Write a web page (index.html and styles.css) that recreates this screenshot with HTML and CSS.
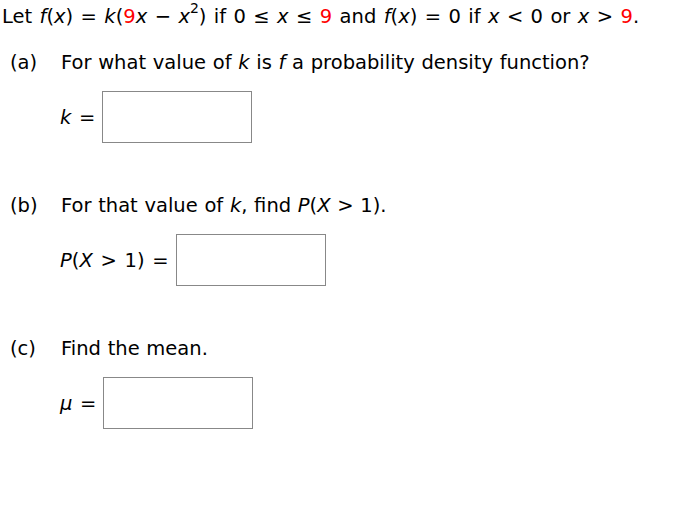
FILE: index.html
```html
<!DOCTYPE html>
<html lang="en">
  <head>
    <meta charset="UTF-8" />
    <title>Probability density function</title>
    <link rel="stylesheet" href="styles.css">
  </head>
  <body>
    <p class="stem">
      Let <i>f</i>(<i>x</i>) = <i>k</i>(<span class="red">9</span><i>x</i> &minus; <i>x</i><sup>2</sup>) if 0 &le; <i>x</i> &le; <span class="red">9</span> and <i>f</i>(<i>x</i>) = 0 if <i>x</i> &lt; 0 or <i>x</i> &gt; <span class="red">9</span>.
    </p>

    <div class="part">
      <div class="question">
        <span class="label">(a)</span>
        <span>For what value of <i>k</i> is <i>f</i> a probability density function?</span>
      </div>
      <div class="answer">
        <span><i>k</i> =</span>
        <input type="text" class="box" />
      </div>
    </div>

    <div class="part">
      <div class="question">
        <span class="label">(b)</span>
        <span>For that value of <i>k</i>, find <i>P</i>(<i>X</i> &gt; 1).</span>
      </div>
      <div class="answer">
        <span><i>P</i>(<i>X</i> &gt; 1) =</span>
        <input type="text" class="box" />
      </div>
    </div>

    <div class="part">
      <div class="question">
        <span class="label">(c)</span>
        <span>Find the mean.</span>
      </div>
      <div class="answer">
        <span><i>&mu;</i> =</span>
        <input type="text" class="box" />
      </div>
    </div>
  </body>
</html>
```

FILE: styles.css
```css
body {
  font-family: "DejaVu Sans", Verdana, sans-serif;
  font-size: 19.5px;
  color: #000;
  background-color: #fff;
  margin: 0;
  padding: 4px 0 0 2px;
}

.stem {
  margin: 0;
  line-height: 26px;
  white-space: nowrap;
  word-spacing: 1.2px;
}

.stem sup {
  font-size: 14px;
  vertical-align: 10px;
  line-height: 0;
}

.red {
  color: #f00;
}

.part {
  padding-left: 8px;
  margin-top: 20px;
}

.part + .part {
  margin-top: 50px;
}

.question {
  display: flex;
  line-height: 26px;
  word-spacing: 0.5px;
}

.label {
  width: 51px;
}

.answer {
  display: flex;
  align-items: center;
  gap: 7px;
  margin: 15px 0 0 50px;
  word-spacing: 1.5px;
}

.box {
  width: 148px;
  height: 50px;
  margin: 0;
  padding: 0;
  border: 1px solid #888;
  border-radius: 0;
  font-size: 16px;
  box-sizing: content-box;
}
```
